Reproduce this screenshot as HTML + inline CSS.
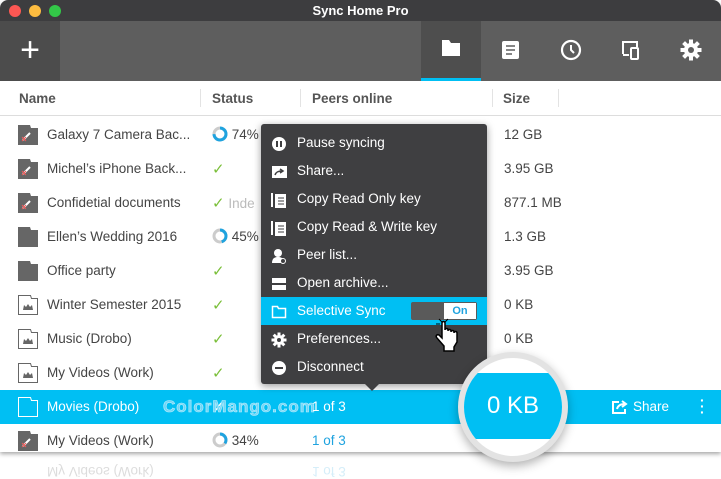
<!DOCTYPE html>
<html><head><style>
*{margin:0;padding:0;box-sizing:border-box}
body{width:721px;height:475px;background:#fff;font-family:"Liberation Sans",sans-serif;position:relative;overflow:hidden}
.win{position:absolute;left:0;top:0;width:721px;height:452px;border-radius:8px 8px 0 0;overflow:hidden;background:#fff;box-shadow:0 2px 4px rgba(0,0,0,.35)}
.title{height:21px;background:#3d3d3f;color:#fff;font-weight:bold;font-size:13px;text-align:center;line-height:21px}
.dot{position:absolute;top:5px;width:12px;height:12px;border-radius:50%}
.tb{position:absolute;top:21px;left:0;width:721px;height:60px;background:#5e5e5e}
.plus{position:absolute;left:0;top:0;width:60px;height:60px;background:#4c4c4c;color:#fff;font-size:34px;text-align:center;line-height:58px}
.tab{position:absolute;top:0;width:60px;height:60px}
.hdr{position:absolute;top:81px;left:0;width:721px;height:35px;border-bottom:1px solid #ddd;font-size:13.5px;font-weight:bold;color:#555}
.hdr span{position:absolute;top:10px}
.sep{position:absolute;top:8px;width:1px;height:18px;background:#e3e3e3}
.row{position:absolute;left:0;width:721px;height:34px;font-size:13.5px;color:#444}
.row .n{position:absolute;left:47px;top:9px}
.row .ic{position:absolute;left:18px;top:7px}
.row .st{position:absolute;left:212px;top:8px}
.row .sz{position:absolute;left:504px;top:9px}
.chk{color:#7bbf3a;font-size:15px}
.menu{position:absolute;left:261px;top:124px;width:226px;height:260px;background:#3f3f41;border-radius:3px;box-shadow:0 2px 8px rgba(0,0,0,.4);color:#fff;font-size:13.5px}
.mi{position:absolute;left:0;width:226px;height:28px}
.mi span{position:absolute;left:36px;top:6px}
.mi .i{position:absolute;left:10px;top:7px}
</style></head><body>
<div class="win">
<div class="title">Sync Home Pro</div>
<div class="dot" style="left:9px;background:#fc5753"></div>
<div class="dot" style="left:29px;background:#fdbc40"></div>
<div class="dot" style="left:49px;background:#33c748"></div>
<div class="tb">
<div class="plus">+</div>
<div class="tab" style="left:421px;background:#4e4e4e;border-bottom:3px solid #00bff3">
<svg width="60" height="57"><path d="M21 19h7l2 3h9v13H21z" fill="#fff"/></svg></div>
<div class="tab" style="left:481px"><svg width="60" height="60"><rect x="21" y="20" width="17" height="18" rx="2" fill="#fff"/><path d="M25 25h9M25 29h9M25 33h6" stroke="#5e5e5e" stroke-width="1.6"/></svg></div>
<div class="tab" style="left:541px"><svg width="60" height="60"><circle cx="30" cy="29" r="9" fill="none" stroke="#fff" stroke-width="2.2"/><path d="M30 24v5l3 3" stroke="#fff" stroke-width="2" fill="none"/></svg></div>
<div class="tab" style="left:601px"><svg width="60" height="60"><path d="M22 33v-12h14v5" stroke="#fff" stroke-width="2" fill="none"/><path d="M22 34h6" stroke="#fff" stroke-width="2"/><rect x="30" y="27" width="7" height="11" rx="1" fill="none" stroke="#fff" stroke-width="2"/></svg></div>
<div class="tab" style="left:661px"><svg width="60" height="60"><g transform="translate(30 29)" fill="#fff"><circle r="7"/><g id="t"><rect x="-2" y="-10.5" width="4" height="21"/></g><use href="#t" transform="rotate(45)"/><use href="#t" transform="rotate(90)"/><use href="#t" transform="rotate(135)"/><circle r="3" fill="#5e5e5e"/></g></svg></div>
</div>
<div class="hdr"><span style="left:19px">Name</span><div class="sep" style="left:200px"></div><span style="left:212px">Status</span><div class="sep" style="left:300px"></div><span style="left:312px">Peers online</span><div class="sep" style="left:492px"></div><span style="left:503px">Size</span><div class="sep" style="left:558px"></div></div>

<div class="row" style="top:118px"><svg class="ic" width="20" height="20"><path d="M0 0h12l1 3h7v17H0z" fill="#666"/><path d="M5 15l7-7" stroke="#fff" stroke-width="2"/><path d="M4 12l4 4M8 12l-4 4" stroke="#e55" stroke-width="1"/></svg><span class="n">Galaxy 7 Camera Bac...</span><span class="st"><svg width="16" height="16" style="vertical-align:-3px"><circle cx="8" cy="8" r="6" fill="none" stroke="#ccc" stroke-width="3"/><circle cx="8" cy="8" r="6" fill="none" stroke="#1fa3df" stroke-width="3" stroke-dasharray="28 38" transform="rotate(-90 8 8)"/></svg> 74%</span><span class="sz">12 GB</span></div>
<div class="row" style="top:152px"><svg class="ic" width="20" height="20"><path d="M0 0h12l1 3h7v17H0z" fill="#666"/><path d="M5 15l7-7" stroke="#fff" stroke-width="2"/><path d="M4 12l4 4M8 12l-4 4" stroke="#e55" stroke-width="1"/></svg><span class="n">Michel’s iPhone Back...</span><span class="st chk">✓</span><span class="sz">3.95 GB</span></div>
<div class="row" style="top:186px"><svg class="ic" width="20" height="20"><path d="M0 0h12l1 3h7v17H0z" fill="#666"/><path d="M5 15l7-7" stroke="#fff" stroke-width="2"/><path d="M4 12l4 4M8 12l-4 4" stroke="#e55" stroke-width="1"/></svg><span class="n">Confidetial documents</span><span class="st"><span class="chk">✓</span> <span style="color:#bbb">Inde</span></span><span class="sz">877.1 MB</span></div>
<div class="row" style="top:220px"><svg class="ic" width="20" height="20"><path d="M0 0h12l1 3h7v17H0z" fill="#666"/></svg><span class="n">Ellen’s Wedding 2016</span><span class="st"><svg width="16" height="16" style="vertical-align:-3px"><circle cx="8" cy="8" r="6" fill="none" stroke="#ccc" stroke-width="3"/><circle cx="8" cy="8" r="6" fill="none" stroke="#1fa3df" stroke-width="3" stroke-dasharray="17 38" transform="rotate(-90 8 8)"/></svg> 45%</span><span class="sz">1.3 GB</span></div>
<div class="row" style="top:254px"><svg class="ic" width="20" height="20"><path d="M0 0h12l1 3h7v17H0z" fill="#666"/></svg><span class="n">Office party</span><span class="st chk">✓</span><span class="sz">3.95 GB</span></div>
<div class="row" style="top:288px"><svg class="ic" width="20" height="20"><path d="M.5 .5h12l1 3h6v16H.5z" fill="none" stroke="#666"/><path d="M5 15l1-5 2 2 2-3 2 3 2-2 1 5z" fill="#666"/></svg><span class="n">Winter Semester 2015</span><span class="st chk">✓</span><span class="sz">0 KB</span></div>
<div class="row" style="top:322px"><svg class="ic" width="20" height="20"><path d="M.5 .5h12l1 3h6v16H.5z" fill="none" stroke="#666"/><path d="M5 15l1-5 2 2 2-3 2 3 2-2 1 5z" fill="#666"/></svg><span class="n">Music (Drobo)</span><span class="st chk">✓</span><span class="sz">0 KB</span></div>
<div class="row" style="top:356px"><svg class="ic" width="20" height="20"><path d="M.5 .5h12l1 3h6v16H.5z" fill="none" stroke="#666"/><path d="M5 15l1-5 2 2 2-3 2 3 2-2 1 5z" fill="#666"/></svg><span class="n">My Videos (Work)</span><span class="st chk">✓</span></div>
<div class="row" style="top:390px;background:#00bff3;color:#fff"><svg class="ic" width="20" height="20"><path d="M.5 .5h12l1 3h6v16H.5z" fill="none" stroke="#fff"/></svg><span class="n">Movies (Drobo)</span><span class="st" style="color:#fff;font-size:15px">✓</span><span style="position:absolute;left:163px;top:7px;font-size:17px;font-weight:bold;color:#6fd6f7;letter-spacing:1px;-webkit-text-stroke:0.6px #b9ecfb">ColorMango.com</span><span style="position:absolute;left:312px;top:9px">1 of 3</span><svg style="position:absolute;left:611px;top:9px" width="18" height="16"><path d="M8 3H2v11h12v-4" fill="none" stroke="#fff" stroke-width="2"/><path d="M6 10c1-4 4-5 8-5M11 2l4 3-4 3" fill="none" stroke="#fff" stroke-width="2"/></svg><span style="position:absolute;left:633px;top:9px">Share</span><span style="position:absolute;left:700px;top:7px;font-weight:bold;font-size:14px;line-height:6px">·<br>·<br>·</span></div>
<div class="row" style="top:424px"><svg class="ic" width="20" height="20"><path d="M0 0h12l1 3h7v17H0z" fill="#666"/><path d="M5 15l7-7" stroke="#fff" stroke-width="2"/><path d="M4 12l4 4M8 12l-4 4" stroke="#e55" stroke-width="1"/></svg><span class="n">My Videos (Work)</span><span class="st"><svg width="16" height="16" style="vertical-align:-3px"><circle cx="8" cy="8" r="6" fill="none" stroke="#ccc" stroke-width="3"/><circle cx="8" cy="8" r="6" fill="none" stroke="#1fa3df" stroke-width="3" stroke-dasharray="13 38" transform="rotate(-90 8 8)"/></svg> 34%</span><span style="position:absolute;left:312px;top:9px;color:#1fa3df">1 of 3</span></div>
</div>
<div style="position:absolute;left:0;top:453px;width:721px;height:22px;opacity:.18;font-size:13.5px;color:#444;transform:scaleY(-1)"><span style="position:absolute;left:47px;top:-4px">My Videos (Work)</span><span style="position:absolute;left:312px;top:-4px;color:#1fa3df">1 of 3</span></div>

<div class="menu">
<div class="mi" style="top:5px"><svg class="i" width="16" height="16"><circle cx="8" cy="8" r="7" fill="#fff"/><path d="M6 5v6M10 5v6" stroke="#3f3f41" stroke-width="2"/></svg><span>Pause syncing</span></div>
<div class="mi" style="top:33px"><svg class="i" width="16" height="16"><rect x="1" y="2" width="15" height="12" fill="#fff"/><path d="M4 11c1-3 3-4 7-4M9 5l3 2-3 2" stroke="#3f3f41" stroke-width="1.5" fill="none"/></svg><span>Share...</span></div>
<div class="mi" style="top:61px"><svg class="i" width="16" height="18"><path d="M1 1v14" stroke="#fff" stroke-width="2"/><rect x="4" y="2" width="11" height="14" fill="#fff"/><path d="M7 6h6M7 9h6M7 12h6" stroke="#3f3f41"/></svg><span>Copy Read Only key</span></div>
<div class="mi" style="top:89px"><svg class="i" width="16" height="18"><path d="M1 1v14" stroke="#fff" stroke-width="2"/><rect x="4" y="2" width="11" height="14" fill="#fff"/><path d="M7 6h6M7 9h6M7 12h6" stroke="#3f3f41"/></svg><span>Copy Read &amp; Write key</span></div>
<div class="mi" style="top:117px"><svg class="i" width="16" height="16"><circle cx="7" cy="5" r="4" fill="#fff"/><path d="M1 15c0-5 3-6 6-6s6 1 6 6z" fill="#fff"/><circle cx="12" cy="13" r="2.5" fill="#3f3f41" stroke="#fff"/></svg><span>Peer list...</span></div>
<div class="mi" style="top:145px"><svg class="i" width="16" height="16"><rect x="1" y="2" width="14" height="5" fill="#fff"/><rect x="1" y="9" width="14" height="5" fill="#fff"/></svg><span>Open archive...</span></div>
<div class="mi" style="top:173px;background:#00bff3"><svg class="i" width="16" height="16"><path d="M1.5 2.5h5l1 2h7v9h-13z" fill="none" stroke="#fff" stroke-width="1.5"/></svg><span>Selective Sync</span><div style="position:absolute;left:150px;top:5px;width:66px;height:18px;background:#5a5a5a;border-radius:2px"><div style="position:absolute;right:1px;top:1px;width:32px;height:16px;background:#fff;color:#1fa3df;font-weight:bold;font-size:11px;text-align:center;line-height:16px">On</div></div></div>
<div class="mi" style="top:201px"><svg class="i" width="16" height="16"><g transform="translate(8 8)" fill="#fff"><circle r="5"/><rect x="-1.5" y="-7.5" width="3" height="15"/><rect x="-1.5" y="-7.5" width="3" height="15" transform="rotate(45)"/><rect x="-1.5" y="-7.5" width="3" height="15" transform="rotate(90)"/><rect x="-1.5" y="-7.5" width="3" height="15" transform="rotate(135)"/><circle r="2" fill="#3f3f41"/></g></svg><span>Preferences...</span></div>
<div class="mi" style="top:229px"><svg class="i" width="16" height="16"><circle cx="8" cy="8" r="7" fill="#fff"/><path d="M4 8h8" stroke="#3f3f41" stroke-width="2"/></svg><span>Disconnect</span></div>
<div style="position:absolute;left:104px;top:260px;width:0;height:0;border-left:7px solid transparent;border-right:7px solid transparent;border-top:7px solid #3f3f41"></div>
</div>
<svg style="position:absolute;left:432px;top:317px" width="30" height="40"><path d="M10 6v15l-3-3c-2-1-4 1-2 3l7 8v5h10v-4l3-5v-9c0-2-3-2-3 0v-1c0-2-3-2-3 0v-1c0-2-3-2-3 0v-1c0-2-3-2-3 0V6c0-2-3-2-3 0z" fill="#fff" stroke="#000" stroke-width="1.5"/><path d="M7 2l3 3M16 2l-3 3M4 7l4 0" stroke="#000"/></svg>
<div style="position:absolute;left:458px;top:352px;width:110px;height:110px;border-radius:50%;background:#fff;border:6px solid #e3e3e3;box-shadow:0 4px 10px rgba(0,0,0,.3);overflow:hidden">
<div style="position:absolute;left:0;top:15px;width:100%;height:66px;background:#00bff3;color:#fff;font-size:24px;text-align:center;line-height:66px">0 KB</div></div>
</body></html>
